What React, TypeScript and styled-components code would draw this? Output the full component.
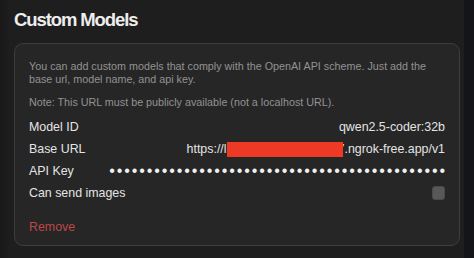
import React from "react";
import styled, { createGlobalStyle } from "styled-components";

const Global = createGlobalStyle`
  html, body { margin: 0; padding: 0; background: #1d1d1d; }
  body { font-family: "Liberation Sans", Arial, sans-serif; -webkit-font-smoothing: antialiased; }
`;

const Page = styled.div`
  display: flex;
  width: 474px;
  height: 258px;
  overflow: hidden;
  background: linear-gradient(90deg, #181818 0px, #1e1e1e 10px, #1e1e1e 100%);
`;

const Main = styled.div`
  flex: 1;
  display: flex;
  flex-direction: column;
  padding: 8px 4px 0 14px;
`;

const Edge = styled.div`
  width: 10px;
  background: #141518;
`;

const Title = styled.h1`
  margin: 0;
  font-size: 18.5px;
  line-height: 24px;
  font-weight: 700;
  color: #ededed;
  letter-spacing: -1.1px;
`;

const Card = styled.div`
  margin-top: 11px;
  height: 203px;
  box-sizing: border-box;
  border: 1px solid #3d3d3d;
  border-radius: 9px;
  background: #262626;
  padding: 16px 14px 0 14px;
  display: flex;
  flex-direction: column;
`;

const Help = styled.p<{ $gap?: number }>`
  margin: 0 0 ${(p) => p.$gap ?? 0}px 0;
  font-size: 10.75px;
  line-height: 13px;
  color: #929292;
`;

const Rows = styled.div`
  display: flex;
  flex-direction: column;
  margin-top: 7px;
`;

const Row = styled.div`
  display: flex;
  align-items: center;
  justify-content: space-between;
  height: 22px;
  font-size: 12.4px;
  color: #e4e4e4;
`;

const Label = styled.span`
  white-space: nowrap;
`;

const Value = styled.span`
  display: flex;
  align-items: center;
  white-space: nowrap;
`;

const Redact = styled.span`
  position: relative;
  display: inline-block;
  width: 116px;
  height: 15px;
  margin-right: -5px;
  background: #ee3a24;
`;

const Dots = styled.span`
  font-size: 16px;
  letter-spacing: 1.9px;
  margin-right: -1.9px;
  color: #f0f0f0;
  white-space: nowrap;
`;

const Check = styled.span`
  width: 13px;
  height: 14px;
  border-radius: 3px;
  background: #585858;
  border: 1px solid #4a4a4a;
  box-sizing: border-box;
`;

const Remove = styled.button`
  all: unset;
  margin-top: 12px;
  font-size: 12.4px;
  line-height: 22px;
  color: #bd4748;
  cursor: pointer;
  align-self: flex-start;
`;

export default function App() {
  return (
    <>
      <Global />
      <Page>
        <Main>
          <Title>Custom Models</Title>
          <Card>
            <Help $gap={10}>
              You can add custom models that comply with the OpenAI API scheme. Just add the
              base url, model name, and api key.
            </Help>
            <Help>Note: This URL must be publicly available (not a localhost URL).</Help>
            <Rows>
              <Row>
                <Label>Model ID</Label>
                <Value>qwen2.5-coder:32b</Value>
              </Row>
              <Row>
                <Label>Base URL</Label>
                <Value>
                  https://l<Redact />7.ngrok-free.app/v1
                </Value>
              </Row>
              <Row>
                <Label>API Key</Label>
                <Dots>{"•".repeat(45)}</Dots>
              </Row>
              <Row>
                <Label>Can send images</Label>
                <Check />
              </Row>
            </Rows>
            <Remove>Remove</Remove>
          </Card>
        </Main>
        <Edge />
      </Page>
    </>
  );
}
